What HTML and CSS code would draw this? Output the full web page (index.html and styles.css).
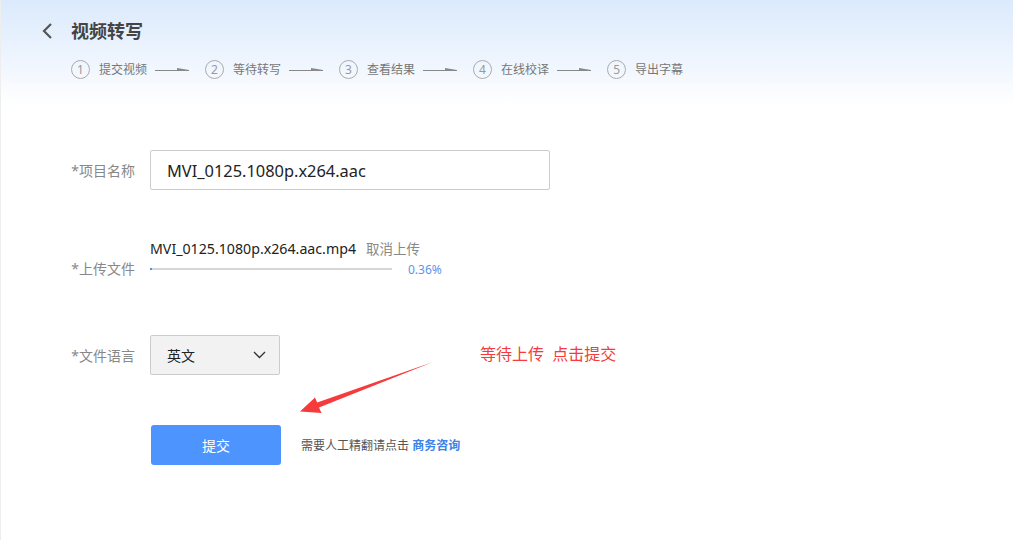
FILE: index.html
```html
<!DOCTYPE html>
<html lang="zh-CN">
<head>
  <meta charset="UTF-8">
  <title>视频转写</title>
  <link rel="stylesheet" href="styles.css">
</head>
<body>

  <div class="page">
    <div class="header">
      <div class="title-row">
        <svg class="back" width="14" height="18" viewBox="0 0 14 18"><path d="M10 2 L3 9 L10 16" fill="none" stroke="#555" stroke-width="2.2"/></svg>
        <h1>视频转写</h1>
      </div>

      <div class="steps">
        <div class="step"><span class="num">1</span>提交视频</div>
        <svg class="step-arrow" width="34" height="8" viewBox="0 0 34 8"><path d="M0 5.5 H34" stroke="#888" stroke-width="1"/><path d="M22 3 L34 5 L34 6 L22 6 Z" fill="#888"/></svg>
        <div class="step"><span class="num">2</span>等待转写</div>
        <svg class="step-arrow" width="34" height="8" viewBox="0 0 34 8"><path d="M0 5.5 H34" stroke="#888" stroke-width="1"/><path d="M22 3 L34 5 L34 6 L22 6 Z" fill="#888"/></svg>
        <div class="step"><span class="num">3</span>查看结果</div>
        <svg class="step-arrow" width="34" height="8" viewBox="0 0 34 8"><path d="M0 5.5 H34" stroke="#888" stroke-width="1"/><path d="M22 3 L34 5 L34 6 L22 6 Z" fill="#888"/></svg>
        <div class="step"><span class="num">4</span>在线校译</div>
        <svg class="step-arrow" width="34" height="8" viewBox="0 0 34 8"><path d="M0 5.5 H34" stroke="#888" stroke-width="1"/><path d="M22 3 L34 5 L34 6 L22 6 Z" fill="#888"/></svg>
        <div class="step"><span class="num">5</span>导出字幕</div>
      </div>
    </div>

    <div class="form">
      <div class="row row-name">
        <label class="label">*项目名称</label>
        <div class="input">MVI_0125.1080p.x264.aac</div>
      </div>

      <div class="row row-upload">
        <label class="label">*上传文件</label>
        <div class="upload">
          <div class="file-line">
            <span class="file-name">MVI_0125.1080p.x264.aac.mp4</span>
            <span class="cancel">取消上传</span>
          </div>
          <div class="progress-line">
            <div class="progress"><div class="progress-fill" style="width:0.36%"></div></div>
            <span class="percent">0.36%</span>
          </div>
        </div>
      </div>

      <div class="row row-lang">
        <label class="label">*文件语言</label>
        <div class="select">
          <span>英文</span>
          <svg width="13" height="8" viewBox="0 0 13 8"><path d="M1 1 L6.5 6.5 L12 1" fill="none" stroke="#333" stroke-width="1.3"/></svg>
        </div>
        <div class="note">等待上传&nbsp;&nbsp;点击提交</div>
      </div>

      <div class="row row-submit">
        <span class="label"></span>
        <button class="submit">提交</button>
        <p class="hint">需要人工精翻请点击 <a href="#">商务咨询</a></p>
      </div>
    </div>

    <!-- annotation arrow drawn over the form -->
    <svg class="annot" width="1013" height="540" viewBox="0 0 1013 540">
      <polygon points="300,411.5 315,397.5 317.2,402.6 433,362 319,407.4 321.5,413" fill="#f53b3b"/>
    </svg>
  </div>

</body>
</html>
```

FILE: styles.css
```css
* {
  box-sizing: border-box;
}

body {
  margin: 0;
  padding: 0;
  font-family: "Noto Sans", "Noto Sans CJK SC", sans-serif;
  color: #333;
  background: #fff;
}

.page {
  position: relative;
  height: 540px;
  border-left: 1px solid #eee;
  background: linear-gradient(to bottom, #dbeafc 0, #eef5fe 60px, #ffffff 105px, #ffffff 100%);
  overflow: hidden;
}

.header {
  padding: 20px 0 0 40px;
  height: 100px;
}

.title-row {
  display: flex;
  align-items: center;
  height: 22px;
}

.back {
  margin-right: 16px;
}

h1 {
  margin: 0;
  font-size: 18px;
  font-weight: bold;
  color: #444;
  line-height: 22px;
}

.steps {
  display: flex;
  align-items: center;
  margin-top: 17px;
  margin-left: 30px;
  height: 20px;
}

.step {
  display: flex;
  align-items: center;
  font-size: 12px;
  color: #777;
}

.num {
  width: 19px;
  height: 19px;
  border: 1px solid #aaa;
  border-radius: 50%;
  display: flex;
  align-items: center;
  justify-content: center;
  font-size: 12px;
  color: #999;
  margin-right: 9px;
}

.step-arrow {
  margin: 0 16px 0 8px;
}

.form {
  padding-top: 50px;
}

.row {
  display: flex;
  align-items: center;
}

.label {
  width: 134px;
  flex: none;
  text-align: right;
  margin-right: 15px;
  font-size: 14px;
  color: #888;
}

.input {
  width: 400px;
  height: 40px;
  border: 1px solid #ccc;
  border-radius: 2px;
  padding-left: 16px;
  display: flex;
  align-items: center;
  font-size: 16.4px;
  color: #222;
  background: #fff;
}

.row-upload {
  margin-top: 48px;
  align-items: flex-end;
}

.row-upload .label {
  line-height: 22px;
}

.upload {
  display: flex;
  flex-direction: column;
}

.file-line {
  display: flex;
  align-items: baseline;
  height: 20px;
}

.file-name {
  font-size: 14.2px;
  color: #222;
}

.cancel {
  margin-left: 10px;
  font-size: 13.5px;
  color: #888;
}

.progress-line {
  display: flex;
  align-items: center;
  height: 22px;
}

.progress {
  width: 242px;
  height: 2px;
  background: #d6d6d6;
}

.progress-fill {
  height: 2px;
  min-width: 2px;
  background: #4d8ff0;
}

.percent {
  margin-left: 16px;
  font-size: 12px;
  color: #5b95ee;
}

.row-lang {
  margin-top: 55px;
}

.select {
  width: 130px;
  height: 40px;
  border: 1px solid #ccc;
  border-radius: 2px;
  background: #f2f2f2;
  padding: 0 13px 0 16px;
  display: flex;
  align-items: center;
  justify-content: space-between;
  font-size: 14px;
  color: #222;
}

.note {
  margin-left: 200px;
  margin-top: -4px;
  font-size: 16px;
  color: #f53b3b;
}

.row-submit {
  margin-top: 50px;
}

.submit {
  width: 130px;
  height: 40px;
  border: none;
  border-radius: 3px;
  background: #4d94ff;
  color: #fff;
  font-family: inherit;
  font-size: 14px;
  margin-left: 1px;
  cursor: pointer;
}

.hint {
  margin: 0 0 0 20px;
  font-size: 12px;
  color: #555;
}

.hint a {
  color: #3a83e8;
  font-weight: bold;
  text-decoration: none;
}

.annot {
  position: absolute;
  left: -1px;
  top: 0;
  pointer-events: none;
}
```
